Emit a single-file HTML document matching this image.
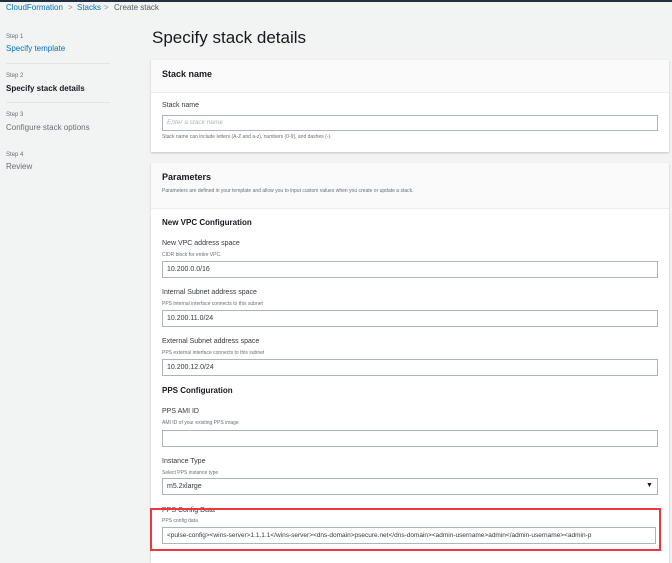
<!DOCTYPE html><html><head><style>
body{margin:0;width:672px;height:552px;overflow:hidden;background:#f2f3f3;font-family:"Liberation Sans",sans-serif;color:#16191f;position:relative}
.a{position:absolute;white-space:nowrap}
.bc{font-size:8px;top:3px}
.st{font-size:6px;color:#687078;left:6px}
.sn{font-size:8px;left:6px}
.hr{position:absolute;left:6px;width:104px;height:1px;background:#e3e5e5}
.card{position:absolute;left:151px;width:518px;background:#fff;box-shadow:0 1px 2px rgba(0,0,0,.2)}
.ch{position:absolute;left:0;top:0;width:100%;background:#fafafa;border-bottom:1px solid #eaeded}
.lb{font-size:7px;left:162px;color:#33393f}
.ht{font-size:5px;color:#687078;left:162px}
.in{position:absolute;left:162px;width:496px;height:17px;border:1px solid #aab7b8;background:#fff;font-size:7px;line-height:15px;padding-left:4px;box-sizing:border-box;white-space:nowrap;overflow:hidden;color:#33393f}
.sh{font-size:8px;font-weight:bold;left:162px}
</style></head><body>
<div class="a" style="left:0;top:0;width:672px;height:2px;background:#232f3e"></div>
<div class="a bc" style="left:6px;color:#0073bb">CloudFormation</div>
<div class="a bc" style="left:68px;color:#879596">&gt;</div>
<div class="a bc" style="left:77px;color:#0073bb">Stacks</div>
<div class="a bc" style="left:104px;color:#879596">&gt;</div>
<div class="a bc" style="left:114px;color:#545b64">Create stack</div>
<div class="a st" style="top:34px">Step 1</div>
<div class="a sn" style="top:44px;color:#0073bb">Specify template</div>
<div class="hr" style="top:63px"></div>
<div class="a st" style="top:73px">Step 2</div>
<div class="a sn" style="top:84px;font-weight:bold">Specify stack details</div>
<div class="hr" style="top:102px"></div>
<div class="a st" style="top:112px">Step 3</div>
<div class="a sn" style="top:123px;color:#687078">Configure stack options</div>
<div class="a st" style="top:152px">Step 4</div>
<div class="a sn" style="top:162px;color:#687078">Review</div>
<div class="a" style="left:152px;top:28px;font-size:17px">Specify stack details</div>
<div class="card" style="top:60px;height:92px"><div class="ch" style="height:32px"></div></div>
<div class="a" style="left:162px;top:69px;font-size:9px;font-weight:bold">Stack name</div>
<div class="a lb" style="top:102px">Stack name</div>
<div class="in" style="top:115px;height:16px;line-height:14px;color:#aab7b8;font-style:italic;font-size:6.5px">Enter a stack name</div>
<div class="a ht" style="top:134px">Stack name can include letters (A-Z and a-z), numbers (0-9), and dashes (-).</div>
<div class="card" style="top:163px;height:400px"><div class="ch" style="height:45px"></div></div>
<div class="a" style="left:162px;top:172px;font-size:9px;font-weight:bold">Parameters</div>
<div class="a ht" style="top:188px">Parameters are defined in your template and allow you to input custom values when you create or update a stack.</div>
<div class="a sh" style="top:218px">New VPC Configuration</div>
<div class="a lb" style="top:240px">New VPC address space</div>
<div class="a ht" style="top:252px">CIDR block for entire VPC.</div>
<div class="in" style="top:261px">10.200.0.0/16</div>
<div class="a lb" style="top:289px">Internal Subnet address space</div>
<div class="a ht" style="top:301px">PPS internal interface connects to this subnet</div>
<div class="in" style="top:310px">10.200.11.0/24</div>
<div class="a lb" style="top:338px">External Subnet address space</div>
<div class="a ht" style="top:350px">PPS external interface connects to this subnet</div>
<div class="in" style="top:359px">10.200.12.0/24</div>
<div class="a sh" style="top:386px">PPS Configuration</div>
<div class="a lb" style="top:408px">PPS AMI ID</div>
<div class="a ht" style="top:420px">AMI ID of your existing PPS image</div>
<div class="in" style="top:430px"></div>
<div class="a lb" style="top:458px">Instance Type</div>
<div class="a ht" style="top:470px">Select PPS instance type</div>
<div class="in" style="top:478px">m5.2xlarge</div>
<div class="a" style="left:646px;top:482px;font-size:7px">▼</div>
<div class="a lb" style="top:507px">PPS Config Data</div>
<div class="a ht" style="top:518px">PPS config data</div>
<div class="in" style="top:527px;height:17px;line-height:15px;font-size:6.5px;width:494px">&lt;pulse-config&gt;&lt;wins-server&gt;1.1.1.1&lt;/wins-server&gt;&lt;dns-domain&gt;psecure.net&lt;/dns-domain&gt;&lt;admin-username&gt;admin&lt;/admin-username&gt;&lt;admin-p</div>
<div class="a" style="left:150px;top:508px;width:507px;height:39px;border:2px solid #f0353b"></div>
</body></html>
